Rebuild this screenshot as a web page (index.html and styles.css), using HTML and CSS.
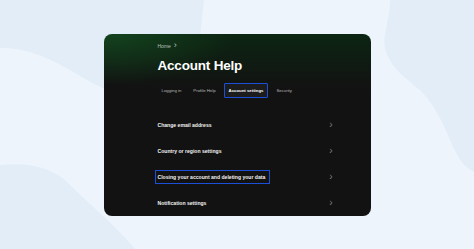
FILE: index.html
```html
<!DOCTYPE html>
<html lang="en">
<head>
<meta charset="UTF-8">
<meta name="viewport" content="width=device-width, initial-scale=1.0">
<title>Account Help</title>
<link rel="stylesheet" href="styles.css">
</head>
<body>
<svg class="blobs" width="474" height="249" viewBox="0 0 474 249">
  <path d="M0 0 H204 C200 40 195 90 180 100 C150 110 110 95 70 70 C40 52 15 47 0 48 Z" fill="#e2edf8"/>
  <path d="M0 165 C30 162 55 168 70 185 C90 205 115 225 135 249 H0 Z" fill="#e2edf8"/>
  <path d="M390 0 H474 V172 C460 165 455 150 450 140 C440 115 430 100 420 90 C405 78 380 60 385 35 C388 18 390 10 390 0 Z" fill="#e2edf8"/>
</svg>
<div class="page">
  <div class="card">
    <div class="crumbs">Home <span class="crumb-arrow">&#x203A;</span></div>
    <h1>Account Help</h1>
    <div class="tabs">
      <span class="tab">Logging in</span>
      <span class="tab">Profile Help</span>
      <span class="tab active">Account settings</span>
      <span class="tab">Security</span>
    </div>
    <ul class="list">
      <li class="row"><span class="label">Change email address</span><span class="chev">&#x203A;</span></li>
      <li class="row"><span class="label">Country or region settings</span><span class="chev">&#x203A;</span></li>
      <li class="row"><span class="label focus">Closing your account and deleting your data</span><span class="chev">&#x203A;</span></li>
      <li class="row"><span class="label">Notification settings</span><span class="chev">&#x203A;</span></li>
    </ul>
  </div>
</div>
</body>
</html>
```
FILE: styles.css
```css
html, body {
  margin: 0;
  height: 100%;
}
body {
  background: #edf4fc;
  font-family: "Liberation Sans", Arial, sans-serif;
  overflow: hidden;
}
.blobs {
  position: absolute;
  left: 0;
  top: 0;
}
.page {
  position: relative;
  height: 249px;
  display: flex;
  align-items: center;
  justify-content: center;
}
.card {
  width: 213px;
  height: 182px;
  padding: 0 0 0 54px;
  box-sizing: content-box;
  border-radius: 8px;
  background:
    radial-gradient(ellipse 120px 50px at 10px 0, rgba(22, 78, 34, 0.7), rgba(22, 78, 34, 0) 100%),
    linear-gradient(to bottom, #0c2512 0, #121212 55px, #121212 100%);
  color: #fff;
  display: flex;
  flex-direction: column;
}
.crumbs {
  margin-top: 9px;
  font-size: 5px;
  color: #b8c0b9;
  display: flex;
  align-items: center;
  gap: 3px;
}
.crumb-arrow {
  font-size: 9px;
  line-height: 5px;
}
h1 {
  margin: 9px 0 0;
  font-size: 13.5px;
  font-weight: bold;
  letter-spacing: -0.2px;
  line-height: 16px;
}
.tabs {
  margin-top: 9px;
  display: flex;
  align-items: center;
  gap: 4px;
  font-size: 4.3px;
  color: #b9b9b9;
}
.tab {
  padding: 4px 4px;
}
.tab.active {
  color: #fff;
  font-weight: bold;
  background: #1c1c1c;
  border: 1px solid #1c4fd8;
  padding: 4px 4px;
  border-radius: 1px;
}
.list {
  list-style: none;
  margin: 14px 0 0;
  padding: 0 38px 0 0;
}
.row {
  height: 26px;
  display: flex;
  align-items: center;
  justify-content: space-between;
}
.label {
  font-size: 5.1px;
  font-weight: bold;
  color: #f2f2f2;
}
.label.focus {
  border: 1px solid #1c4fd8;
  margin-left: -3px;
  padding: 3px 4px 3px 2px;
}
.chev {
  font-size: 10px;
  color: #7e7e7e;
  line-height: 8px;
}
```
